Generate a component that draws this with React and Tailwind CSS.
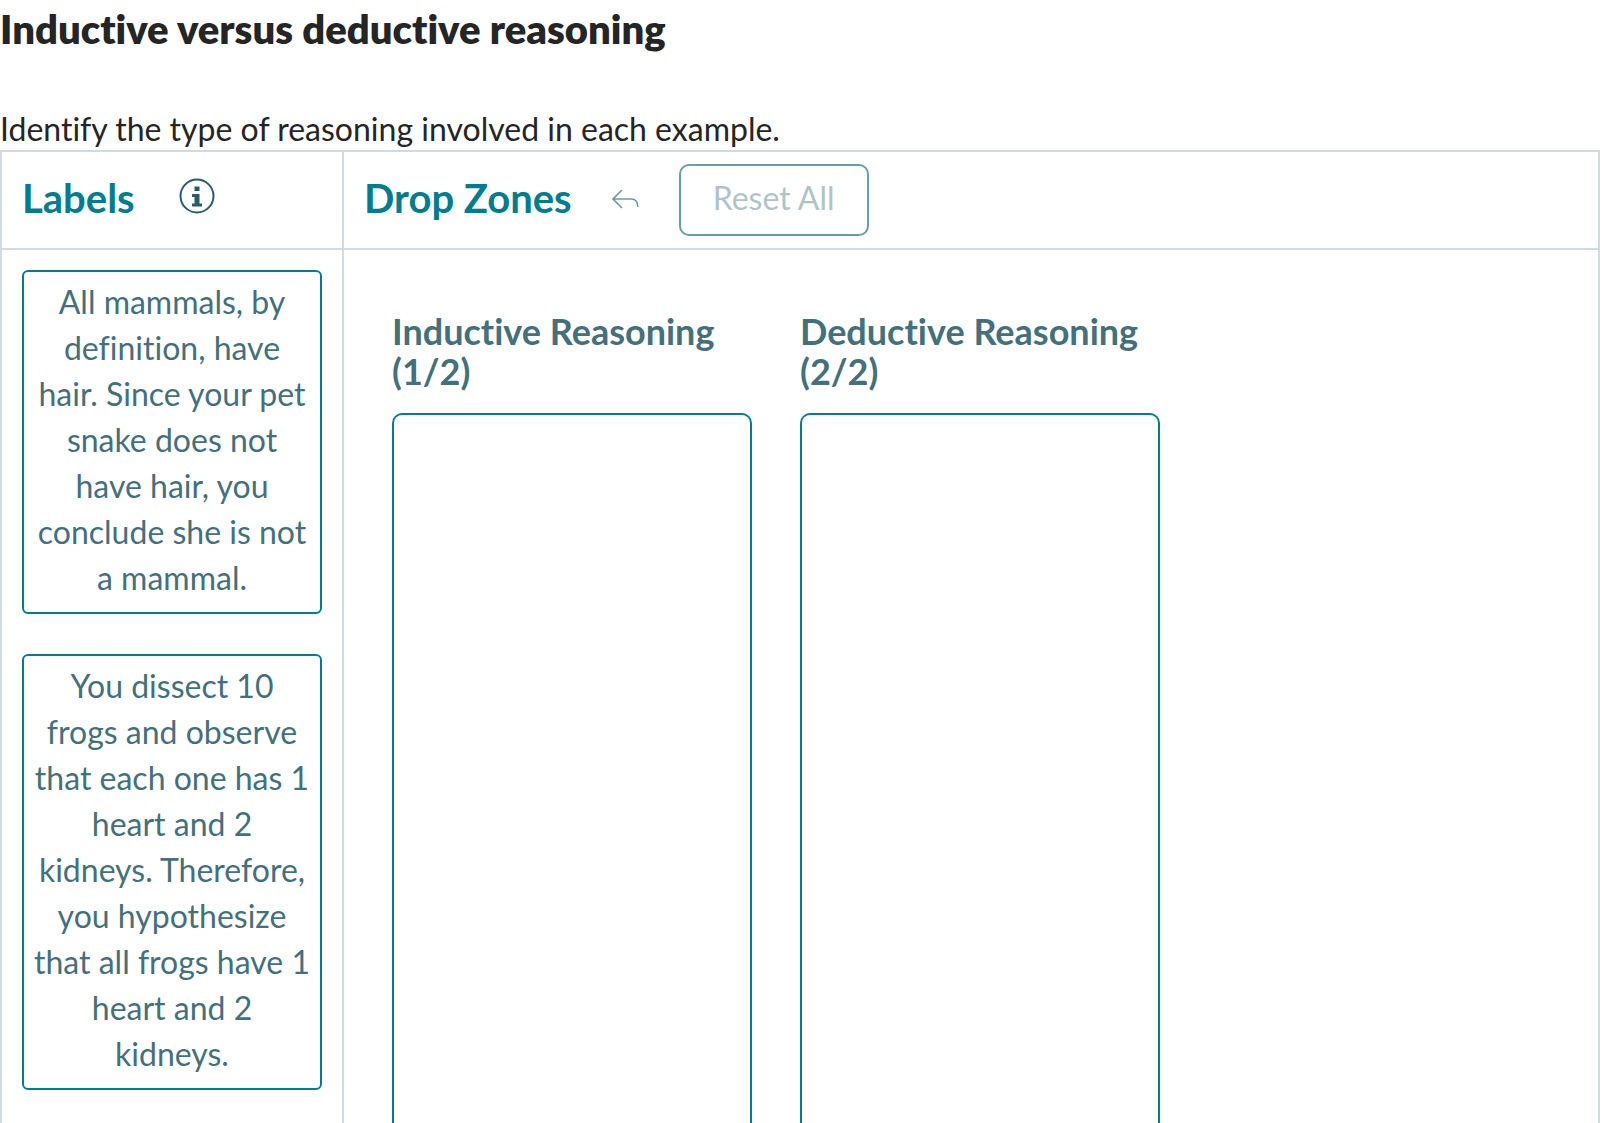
import { useState } from "react";

const labels = [
  "All mammals, by definition, have hair. Since your pet snake does not have hair, you conclude she is not a mammal.",
  "You dissect 10 frogs and observe that each one has 1 heart and 2 kidneys. Therefore, you hypothesize that all frogs have 1 heart and 2 kidneys.",
];

const zones = [
  { title: "Inductive Reasoning", count: "(1/2)" },
  { title: "Deductive Reasoning", count: "(2/2)" },
];

const InfoIcon = () => (
  <svg width="36" height="36" viewBox="0 0 36 36" fill="none" aria-hidden="true">
    <circle cx="18" cy="18" r="16.5" stroke="#2a5d6b" strokeWidth="2" />
    <path d="M15.5 8.5h5v4.5h-5zM13 16h7.500v9.500h2.500v3h-10v-3h2.500v-6.500h-2.500z" fill="#2a5d6b" />
  </svg>
);

const UndoIcon = () => (
  <svg width="27" height="20" viewBox="0 0 27 20" fill="none" stroke="#7399a3" strokeWidth="1.6" aria-hidden="true">
    <path d="M10 1L1 10l9 9M1 10h18.500c4 0 6.200 2.500 6.200 8" />
  </svg>
);

const LabelCard = ({ text }) => (
  <button
    type="button"
    draggable
    className="w-full rounded-md border-2 border-[#007c8f] bg-white px-2 pt-[7px] pb-[11px] text-center text-[32px] leading-[46px] text-[#44707c]"
  >
    {text}
  </button>
);

const DropZone = ({ title, count }) => (
  <section className="flex w-[360px] flex-col">
    <h3 className="text-4xl leading-10 font-bold text-[#44707c]">
      {title}
      <br />
      {count}
    </h3>
    <div className="mt-[22px] flex-1 rounded-t-[10px] border-2 border-b-0 border-[#007c8f]" />
  </section>
);

const App = () => {
  const [history] = useState([]);

  return (
    <div className="flex h-screen flex-col overflow-hidden bg-white pr-[3px] font-['Lato',sans-serif] text-[#252525] [font-variant-ligatures:none]">
      <h1 className="pt-[3px] text-[40px] leading-[52px] font-extrabold">Inductive versus deductive reasoning</h1>
      <p className="mt-[52px] text-[32px] leading-[43px]">
        Identify the type of reasoning involved in each example.
      </p>

      <div className="flex flex-1 border-2 border-b-0 border-[#cfdbdd]">
        {/* Labels column */}
        <aside className="flex w-[342px] shrink-0 flex-col border-r-2 border-[#cfdbdd]">
          <header className="flex h-[98px] items-center gap-11 border-b-2 border-[#cfdbdd] px-5">
            <h2 className="pb-1 text-[40px] leading-[52px] font-bold text-[#007c8f]">Labels</h2>
            <button type="button" aria-label="Information" className="pb-2">
              <InfoIcon />
            </button>
          </header>
          <div className="flex flex-col gap-10 p-5">
            {labels.map((text) => (
              <LabelCard key={text} text={text} />
            ))}
          </div>
        </aside>

        {/* Drop zones */}
        <main className="flex min-w-0 flex-1 flex-col">
          <header className="flex h-[98px] items-center gap-10 border-b-2 border-[#cfdbdd] px-5">
            <h2 className="pb-1 text-[40px] leading-[52px] font-bold text-[#007c8f]">Drop Zones</h2>
            <button type="button" aria-label="Undo" disabled={history.length === 0} className="pb-0.5">
              <UndoIcon />
            </button>
            <button
              type="button"
              disabled={history.length === 0}
              className="h-[72px] rounded-[10px] border-2 border-[#669fab] px-8 pb-1 text-[32px] leading-[46px] text-[#b0c3c9]"
            >
              Reset All
            </button>
          </header>
          <div className="flex flex-1 gap-12 px-12 pt-[61px]">
            {zones.map((zone) => (
              <DropZone key={zone.title} title={zone.title} count={zone.count} />
            ))}
          </div>
        </main>
      </div>
    </div>
  );
};

export default App;
